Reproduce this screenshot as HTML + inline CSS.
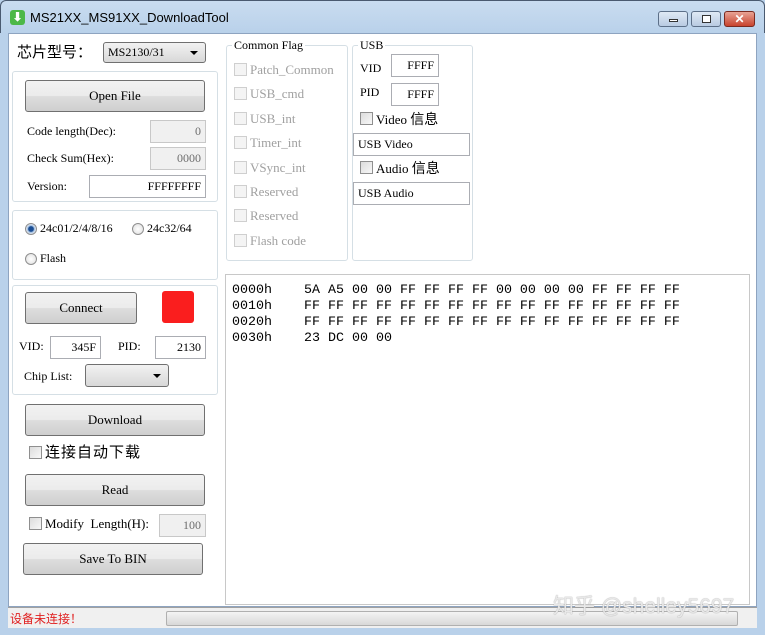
<!DOCTYPE html>
<html><head><meta charset="utf-8"><style>
*{box-sizing:border-box;margin:0;padding:0}
body{width:765px;height:635px;background:#b9d1ea;position:relative;overflow:hidden;font-family:"Liberation Serif","Noto Serif CJK SC",serif;font-size:12px;color:#000}
.a{position:absolute}
.title{left:0;top:0;width:765px;height:33px;background:linear-gradient(#c9dcf0,#b9d1ea);border:1px solid #4a5a70;border-bottom:none;border-radius:6px 6px 0 0}
.client{left:8px;top:33px;width:749px;height:574px;background:#fff;border:1px solid #8ea4c0}
.grp{position:absolute;border:1px solid #d5dfe5;border-radius:3px;background:#fff}
.btn{position:absolute;border:1px solid #707070;border-radius:3px;background:linear-gradient(#f2f2f2 0%,#ebebeb 50%,#dddddd 51%,#cfcfcf 100%);text-align:center;font-size:13px}
.tb{position:absolute;border:1px solid #abadb3;background:#fff;text-align:right;padding-right:4px;font-size:12px;line-height:20px}
.tb.dis{background:#f0f0f0;color:#6d6d6d;border-color:#c8c8c8}
.cb{position:absolute;width:13px;height:13px;border:1px solid #8f8f8f;background:linear-gradient(135deg,#dcdcdc,#f8f8f8)}
.cb.dis{border-color:#cfcfcf;background:#f4f4f4}
.gray{color:#a0a0a0}
.rad{position:absolute;width:12px;height:12px;border-radius:50%;border:1px solid #8f8f8f;background:radial-gradient(#fff,#ddd)}
.dd{position:absolute;border:1px solid #707070;border-radius:3px;background:linear-gradient(#f2f2f2,#d8d8d8)}
.dd:after{content:"";position:absolute;right:7px;top:50%;margin-top:-2px;border-left:4px solid transparent;border-right:4px solid transparent;border-top:4px solid #000}
.hex{font-family:"Liberation Mono",monospace;font-size:13.33px;line-height:16px;white-space:pre;color:#000}
.wb{position:absolute;top:11px;height:16px;border:1px solid #5c6f88;border-radius:3px;background:linear-gradient(#dfe9f5,#b9cbe2)}
</style></head><body>
<div class="a title"></div>
<div class="a" style="left:10px;top:10px;width:15px;height:15px;background:#4cb848;border-radius:3px;color:#fff;font:bold 12px 'Liberation Sans';text-align:center;line-height:15px">⬇</div>
<div class="a" style="left:30px;top:10px;font:13px 'Liberation Sans',sans-serif;color:#000">MS21XX_MS91XX_DownloadTool</div>
<div class="wb" style="left:658px;width:30px"><div class="a" style="left:10px;top:7px;width:9px;height:3px;border:1px solid #333;background:#fff"></div></div>
<div class="wb" style="left:691px;width:30px"><div class="a" style="left:10px;top:3px;width:9px;height:8px;border:1px solid #333;background:#fff"></div></div>
<div class="wb" style="left:724px;width:31px;background:linear-gradient(#e8a395,#c8432e);border-color:#7a2a20;color:#fff;font:bold 12px 'Liberation Sans';text-align:center;line-height:14px">✕</div>

<div class="a client"></div>

<div class="a" style="left:17px;top:42px;font-size:15px;font-family:'Noto Sans CJK SC',sans-serif;line-height:20px">芯片型号：</div>
<div class="dd" style="left:103px;top:42px;width:103px;height:21px;padding-left:4px;line-height:19px">MS2130/31</div>

<div class="grp" style="left:12px;top:71px;width:206px;height:131px"></div>
<div class="btn" style="left:25px;top:80px;width:180px;height:32px;line-height:30px">Open File</div>
<div class="a" style="left:27px;top:124px">Code length(Dec):</div>
<div class="tb dis" style="left:150px;top:120px;width:56px;height:23px">0</div>
<div class="a" style="left:27px;top:151px">Check Sum(Hex):</div>
<div class="tb dis" style="left:150px;top:147px;width:56px;height:23px">0000</div>
<div class="a" style="left:27px;top:179px">Version:</div>
<div class="tb" style="left:89px;top:175px;width:117px;height:23px">FFFFFFFF</div>

<div class="grp" style="left:12px;top:210px;width:206px;height:70px"></div>
<div class="rad" style="left:25px;top:223px;background:radial-gradient(#1b4e94 35%,#9ab8dc 45%,#e8eef6 70%)"></div>
<div class="a" style="left:40px;top:221px">24c01/2/4/8/16</div>
<div class="rad" style="left:132px;top:223px"></div>
<div class="a" style="left:147px;top:221px">24c32/64</div>
<div class="rad" style="left:25px;top:253px"></div>
<div class="a" style="left:40px;top:251px">Flash</div>

<div class="grp" style="left:12px;top:285px;width:206px;height:110px"></div>
<div class="btn" style="left:25px;top:292px;width:112px;height:32px;line-height:30px">Connect</div>
<div class="a" style="left:162px;top:291px;width:32px;height:32px;background:#fa1e1e;border-radius:3px"></div>
<div class="a" style="left:19px;top:339px">VID:</div>
<div class="tb" style="left:50px;top:336px;width:51px;height:23px">345F</div>
<div class="a" style="left:118px;top:339px">PID:</div>
<div class="tb" style="left:155px;top:336px;width:51px;height:23px">2130</div>
<div class="a" style="left:24px;top:369px">Chip List:</div>
<div class="dd" style="left:85px;top:364px;width:84px;height:23px"></div>

<div class="btn" style="left:25px;top:404px;width:180px;height:32px;line-height:30px">Download</div>
<div class="cb" style="left:29px;top:446px"></div>
<div class="a" style="left:45px;top:442px;font-size:15px;font-family:'Noto Sans CJK SC',sans-serif;line-height:20px;letter-spacing:1px">连接自动下载</div>
<div class="btn" style="left:25px;top:474px;width:180px;height:32px;line-height:30px">Read</div>
<div class="cb" style="left:29px;top:517px"></div>
<div class="a" style="left:45px;top:516px;font-size:13px">Modify&nbsp; Length(H):</div>
<div class="tb dis" style="left:159px;top:514px;width:47px;height:23px">100</div>
<div class="btn" style="left:23px;top:543px;width:180px;height:32px;line-height:30px">Save To BIN</div>

<div class="grp" style="left:226px;top:45px;width:122px;height:216px"></div>
<div class="a" style="left:232px;top:38px;background:#fff;padding:0 2px">Common Flag</div>
<div class="cb dis" style="left:234px;top:63px"></div><div class="a gray" style="left:250px;top:62px;font-size:13px">Patch_Common</div>
<div class="cb dis" style="left:234px;top:87px"></div><div class="a gray" style="left:250px;top:86px;font-size:13px">USB_cmd</div>
<div class="cb dis" style="left:234px;top:112px"></div><div class="a gray" style="left:250px;top:111px;font-size:13px">USB_int</div>
<div class="cb dis" style="left:234px;top:136px"></div><div class="a gray" style="left:250px;top:135px;font-size:13px">Timer_int</div>
<div class="cb dis" style="left:234px;top:161px"></div><div class="a gray" style="left:250px;top:160px;font-size:13px">VSync_int</div>
<div class="cb dis" style="left:234px;top:185px"></div><div class="a gray" style="left:250px;top:184px;font-size:13px">Reserved</div>
<div class="cb dis" style="left:234px;top:209px"></div><div class="a gray" style="left:250px;top:208px;font-size:13px">Reserved</div>
<div class="cb dis" style="left:234px;top:234px"></div><div class="a gray" style="left:250px;top:233px;font-size:13px">Flash code</div>

<div class="grp" style="left:352px;top:45px;width:121px;height:216px"></div>
<div class="a" style="left:358px;top:38px;background:#fff;padding:0 2px">USB</div>
<div class="a" style="left:360px;top:61px">VID</div>
<div class="tb" style="left:391px;top:54px;width:48px;height:23px">FFFF</div>
<div class="a" style="left:360px;top:85px">PID</div>
<div class="tb" style="left:391px;top:83px;width:48px;height:23px">FFFF</div>
<div class="cb" style="left:360px;top:112px"></div>
<div class="a" style="left:376px;top:109px;font-size:13px">Video <span style="font-family:'Noto Sans CJK SC';font-size:14px">信息</span></div>
<div class="tb" style="left:353px;top:133px;width:117px;height:23px;text-align:left;padding-left:4px">USB Video</div>
<div class="cb" style="left:360px;top:161px"></div>
<div class="a" style="left:376px;top:158px;font-size:13px">Audio <span style="font-family:'Noto Sans CJK SC';font-size:14px">信息</span></div>
<div class="tb" style="left:353px;top:182px;width:117px;height:23px;text-align:left;padding-left:4px">USB Audio</div>

<div class="a" style="left:225px;top:274px;width:525px;height:331px;border:1px solid #c8c8c8;background:#fff"></div>
<div class="a hex" style="left:232px;top:283px">0000h    5A A5 00 00 FF FF FF FF 00 00 00 00 FF FF FF FF
0010h    FF FF FF FF FF FF FF FF FF FF FF FF FF FF FF FF
0020h    FF FF FF FF FF FF FF FF FF FF FF FF FF FF FF FF
0030h    23 DC 00 00</div>

<div class="a" style="left:8px;top:607px;width:749px;height:21px;background:#f0f0f0;border-top:1px solid #a0a0a0"></div>
<div class="a" style="left:10px;top:611px;color:#e02020;font-family:'Noto Sans CJK SC',sans-serif;font-size:12px;line-height:16px">设备未连接！</div>
<div class="a" style="left:166px;top:611px;width:572px;height:15px;border:1px solid #b0b0b0;border-radius:2px;background:linear-gradient(#f4f4f4,#d8d8d8)"></div>
<div class="a" style="left:553px;top:590px;font:21px 'Liberation Sans','Noto Sans CJK SC',sans-serif;color:#e8e8e8;text-shadow:0 0 1px #888">知乎 @shelley5697</div>
</body></html>
